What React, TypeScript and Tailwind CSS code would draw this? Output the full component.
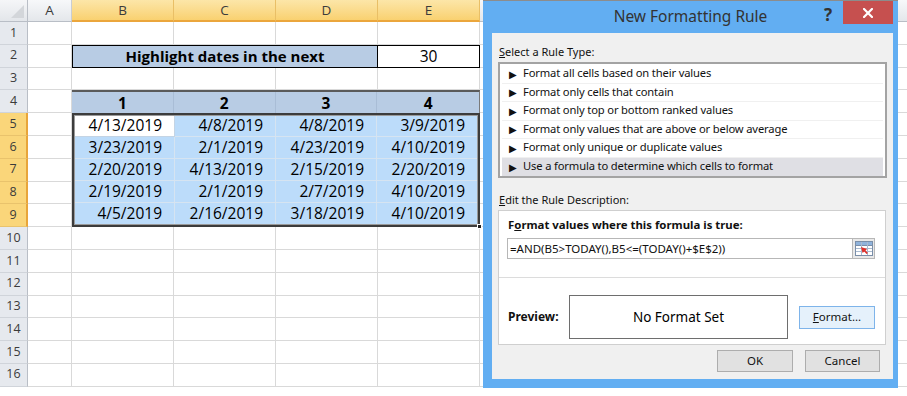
import React from 'react';

const cols = ['B', 'C', 'D', 'E'];
const data: string[][] = [
  ['4/13/2019', '4/8/2019', '4/8/2019', '3/9/2019'],
  ['3/23/2019', '2/1/2019', '4/23/2019', '4/10/2019'],
  ['2/20/2019', '4/13/2019', '2/15/2019', '2/20/2019'],
  ['2/19/2019', '2/1/2019', '2/7/2019', '4/10/2019'],
  ['4/5/2019', '2/16/2019', '3/18/2019', '4/10/2019'],
];

const sheetFont = { fontFamily: '"Open Sans", "Noto Sans", sans-serif' };
const uiFont = { fontFamily: '"Noto Sans", "Open Sans", sans-serif' };

function RowHead({ n, sel }: { n: number; sel?: boolean }) {
  return (
    <div
      className={
        sel
          ? 'w-[28px] shrink-0 h-full flex items-center justify-center text-[12.5px] text-[#3b3b3b] bg-[#fad67a] border-r-2 border-r-[#e8a53a] border-b border-b-[#e9c36c]'
          : 'w-[28px] shrink-0 h-full flex items-center justify-center text-[12.5px] text-[#3b3b3b] bg-[#e6e9ee] border-r border-r-[#b9bec6] border-b border-b-[#d0d4da]'
      }
    >
      {n}
    </div>
  );
}

function Cell({ w, children, className = '' }: { w: string; children?: React.ReactNode; className?: string }) {
  return <div className={`${w} shrink-0 h-full border-r border-b border-[#d9d9d9] ${className}`}>{children}</div>;
}

function PlainRow({ n }: { n: number }) {
  return (
    <div className="flex h-[22.8px]">
      <RowHead n={n} />
      <Cell w="w-[44px]" />
      <Cell w="w-[102px]" />
      <Cell w="w-[102px]" />
      <Cell w="w-[102px]" />
      <Cell w="w-[102px]" />
      <div className="flex-1 h-full border-b border-[#d9d9d9]" />
    </div>
  );
}

function RangeIcon() {
  return (
    <svg width="18" height="15" viewBox="0 0 18 15">
      <rect x="0.5" y="0.5" width="17" height="14" fill="#ffffff" stroke="#7a8ea8" />
      <rect x="1" y="1" width="16" height="3" fill="#8fb3dc" />
      <line x1="1" y1="4.5" x2="17" y2="4.5" stroke="#7a8ea8" />
      <line x1="1" y1="7.5" x2="17" y2="7.5" stroke="#a9bad0" />
      <line x1="1" y1="10.5" x2="17" y2="10.5" stroke="#a9bad0" />
      <line x1="6.5" y1="1" x2="6.5" y2="14" stroke="#a9bad0" />
      <line x1="12.5" y1="1" x2="12.5" y2="14" stroke="#a9bad0" />
      <path d="M6 6 L12 8 L10.5 9.5 L13 12 L11.5 13 L9.2 10.6 L7.6 12 Z" fill="#e0312b" />
    </svg>
  );
}

const ruleTypes = [
  'Format all cells based on their values',
  'Format only cells that contain',
  'Format only top or bottom ranked values',
  'Format only values that are above or below average',
  'Format only unique or duplicate values',
  'Use a formula to determine which cells to format',
];

export default function App() {
  return (
    <div className="relative w-[907px] h-[396px] overflow-hidden bg-white" style={sheetFont}>
      {/* Spreadsheet */}
      <div className="flex flex-col w-full">
        {/* column header */}
        <div className="flex h-[22px]">
          <div className="w-[28px] shrink-0 h-full bg-gradient-to-b from-[#f5f6f8] to-[#e3e6ea] border-r border-b border-[#b9bec6] flex items-end justify-end p-[3px]">
            <svg width="13" height="13" viewBox="0 0 13 13">
              <path d="M13 0 L13 13 L0 13 Z" fill="#d3d6da" />
            </svg>
          </div>
          <div className="w-[44px] shrink-0 h-full bg-gradient-to-b from-[#f7f8fa] to-[#e4e7eb] border-r border-r-[#c9cdd3] border-b border-b-[#b9bec6] flex items-center justify-center text-[13.5px] text-[#3b3b3b]">
            A
          </div>
          {cols.map((c) => (
            <div
              key={c}
              className="w-[102px] shrink-0 h-full bg-gradient-to-b from-[#fce6a8] to-[#f9d170] border-r border-r-[#e9bf66] border-b-2 border-b-[#eba63c] flex items-center justify-center text-[13.5px] text-[#3b3b3b]"
            >
              {c}
            </div>
          ))}
          <div className="flex-1 h-full bg-gradient-to-b from-[#f7f8fa] to-[#e4e7eb] border-b border-[#b9bec6]" />
        </div>

        <PlainRow n={1} />

        {/* row 2 */}
        <div className="flex h-[22.8px]">
          <RowHead n={2} />
          <Cell w="w-[44px]" />
          <div className="w-[306px] shrink-0 h-full bg-[#b8cce4] border border-black flex items-center justify-center text-[15px] font-bold text-black">
            Highlight dates in the next
          </div>
          <div className="w-[102px] shrink-0 h-full bg-white border border-l-0 border-black flex items-center justify-center text-[15.5px] text-black">
            30
          </div>
          <div className="flex-1 h-full border-b border-[#d9d9d9]" />
        </div>

        <PlainRow n={3} />

        {/* row 4 */}
        <div className="flex h-[22.8px]">
          <RowHead n={4} />
          <Cell w="w-[44px]" />
          <div className="w-[408px] shrink-0 h-full bg-[#b8cce4] border-t-2 border-t-[#5a5a5a] border-r border-r-[#7a7a7a] grid grid-cols-4">
            {['1', '2', '3', '4'].map((h, i) => (
              <div
                key={h}
                className={
                  i < 3
                    ? 'flex items-center justify-center text-[15.5px] font-bold text-black border-r border-[#a9bdd6]'
                    : 'flex items-center justify-center text-[15.5px] font-bold text-black'
                }
              >
                {h}
              </div>
            ))}
          </div>
          <div className="flex-1 h-full border-b border-[#d9d9d9]" />
        </div>

        {/* rows 5-9 with selection */}
        <div className="flex">
          <div className="flex flex-col">
            {[5, 6, 7, 8, 9].map((n) => (
              <div key={n} className="flex h-[22.8px]">
                <RowHead n={n} sel />
                <Cell w="w-[44px]" />
              </div>
            ))}
          </div>
          <div className="relative w-[408px] shrink-0 grid grid-cols-4 grid-rows-5 h-[114px] border-2 border-[#3c3c3c] outline outline-1 outline-[#9a9a9a] -outline-offset-[3px]">
            {data.map((row, r) =>
              row.map((v, c) => (
                <div
                  key={`${r}-${c}`}
                  className={
                    r === 0 && c === 0
                      ? 'bg-white flex items-center justify-end pr-[12px] text-[15.5px] text-black border-r border-b border-[#c4d4e4]'
                      : 'bg-[#bcdcfa] flex items-center justify-end pr-[12px] text-[15.5px] text-black border-r border-b border-[#d6e4f1]'
                  }
                >
                  {v}
                </div>
              ))
            )}
            <div className="absolute -right-[4px] -bottom-[4px] w-[5px] h-[5px] bg-[#222] border border-white" />
          </div>
          <div className="flex-1 flex flex-col">
            {[5, 6, 7, 8, 9].map((n) => (
              <div key={n} className="h-[22.8px] border-b border-[#d9d9d9]" />
            ))}
          </div>
        </div>

        {[10, 11, 12, 13, 14, 15, 16].map((n) => (
          <PlainRow key={n} n={n} />
        ))}
      </div>

      {/* Dialog window */}
      <div className="absolute left-[483px] top-0 w-[415px] h-[388px] bg-[#62aef2] flex flex-col border-t border-t-[#8c8c8c]" style={uiFont}>
        <div className="h-[32px] grid grid-cols-[1fr_auto_1fr]">
          <div />
          <div className="flex items-center text-[15.5px] text-[#333333] pb-[1px]">New Formatting Rule</div>
          <div className="flex justify-end items-start">
            <div className="mt-[5px] mr-[11px] text-[17px] font-bold text-[#333333] leading-none">?</div>
            <div className="w-[50px] h-[23px] bg-[#c6504f] flex items-center justify-center mr-[5px]">
              <svg width="10" height="10" viewBox="0 0 10 10">
                <path d="M1 1 L9 9 M9 1 L1 9" stroke="#ffffff" strokeWidth="2.2" strokeLinecap="square" />
              </svg>
            </div>
          </div>
        </div>

        <div className="ml-[9px] mr-[5px] mb-[9px] flex-1 bg-[#f0f0f0] flex flex-col text-[11px] text-[#111]">
          <div className="pl-[7px] pt-[11px] h-[27px] leading-[16px]">
            <span className="underline">S</span>elect a Rule Type:
          </div>
          <div className="ml-[6px] mt-[2px] w-[389px] h-[116px] bg-white border-2 border-[#a3a3a3] pt-[1px] px-[2px] flex flex-col">
            {ruleTypes.map((t, i) => (
              <div
                key={t}
                className={
                  i === 5
                    ? 'h-[18.5px] flex items-center gap-[6px] pl-[7px] bg-[#dfdfe4] text-[11.2px]'
                    : 'h-[18.5px] flex items-center gap-[6px] pl-[7px] border-b border-[#f0f0f0] text-[11.2px]'
                }
              >
                <span className="text-[10px] leading-none">▶</span>
                <span className="tracking-[-0.15px]">{t}</span>
              </div>
            ))}
          </div>
          <div className="pl-[7px] mt-[14px] h-[16px] leading-[16px]">
            <span className="underline">E</span>dit the Rule Description:
          </div>
          <div className="ml-[6px] mt-[2px] w-[388px] h-[135px] bg-white border border-[#cfcfcf] flex flex-col">
            <div className="pl-[9px] pt-[6px] h-[22px] leading-[16px] font-bold text-[11.4px]">
              F<span className="underline">o</span>rmat values where this formula is true:
            </div>
            <div className="ml-[8px] mt-[5px] w-[368px] h-[21px] border border-[#b7b7b7] flex items-center">
              <div className="flex-1 pl-[2px] text-[11.5px]">=AND(B5&gt;TODAY(),B5&lt;=(TODAY()+$E$2))</div>
              <div className="w-[22px] h-full border-l border-[#b7b7b7] bg-[#e9e9e9] flex items-center justify-center">
                <RangeIcon />
              </div>
            </div>
            <div className="mt-[18px] h-px bg-[#dcdcdc]" />
            <div className="mt-[17px] flex items-center">
              <div className="w-[70px] pl-[9px] font-bold text-[12px]">Preview:</div>
              <div className="w-[219px] h-[44px] border border-[#6e6e6e] flex items-center justify-center text-[13.5px] text-black">
                No Format Set
              </div>
              <div className="ml-[11px] w-[76px] h-[23px] border border-[#7eb4ea] bg-[#e5f1fb] flex items-center justify-center text-[11.5px]">
                <span className="underline">F</span>ormat...
              </div>
            </div>
          </div>
          <div className="mt-[5px] flex justify-end gap-[12px] pr-[13px] text-[11.5px]">
            <div className="w-[76px] h-[22px] border border-[#adadad] bg-[#e1e1e1] flex items-center justify-center">OK</div>
            <div className="w-[75px] h-[22px] border border-[#adadad] bg-[#e1e1e1] flex items-center justify-center">Cancel</div>
          </div>
        </div>
      </div>
    </div>
  );
}
